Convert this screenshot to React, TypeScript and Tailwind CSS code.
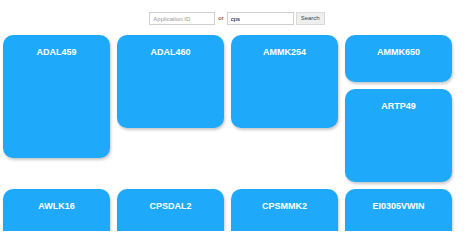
import React from "react";

function Card({ name, h }: { name: string; h: string }) {
  return (
    <div
      className={`${h} w-[107px] rounded-[10px] bg-[#1fa9fb] pt-[12px] text-center text-[9px] leading-[11px] font-bold text-white shadow-[1px_2px_3px_rgba(0,0,0,0.22)]`}
    >
      {name}
    </div>
  );
}

export default function App() {
  return (
    <div className="h-[231px] overflow-hidden bg-white font-['Liberation_Sans',Arial,sans-serif]">
      <div className="flex items-center justify-center gap-[2px] pt-[12px]">
        <input
          className="h-[13px] w-[66px] border border-[#d0d0d0] px-[3px] text-[6px] text-black outline-none placeholder:text-[#9a9a9a]"
          placeholder="Application ID"
        />
        <span className="px-[1px] text-[6px] text-[#333]">or</span>
        <input
          className="h-[13px] w-[67px] border border-[#d0d0d0] px-[3px] text-[6px] text-black outline-none"
          defaultValue="cps"
        />
        <button className="h-[13px] w-[29px] border border-[#dadada] bg-[#efefef] text-[6px] text-[#444]">
          Search
        </button>
      </div>
      <div className="mt-[10px] grid grid-cols-[repeat(4,107px)] items-start gap-x-[7px] gap-y-[7px] pl-[3px]">
        <Card name="ADAL459" h="h-[123px]" />
        <Card name="ADAL460" h="h-[93px]" />
        <Card name="AMMK254" h="h-[93px]" />
        <div className="flex flex-col gap-[7px]">
          <Card name="AMMK650" h="h-[47px]" />
          <Card name="ARTP49" h="h-[93px]" />
        </div>
        <Card name="AWLK16" h="h-[93px]" />
        <Card name="CPSDAL2" h="h-[93px]" />
        <Card name="CPSMMK2" h="h-[93px]" />
        <Card name="EI0305VWIN" h="h-[93px]" />
      </div>
    </div>
  );
}
